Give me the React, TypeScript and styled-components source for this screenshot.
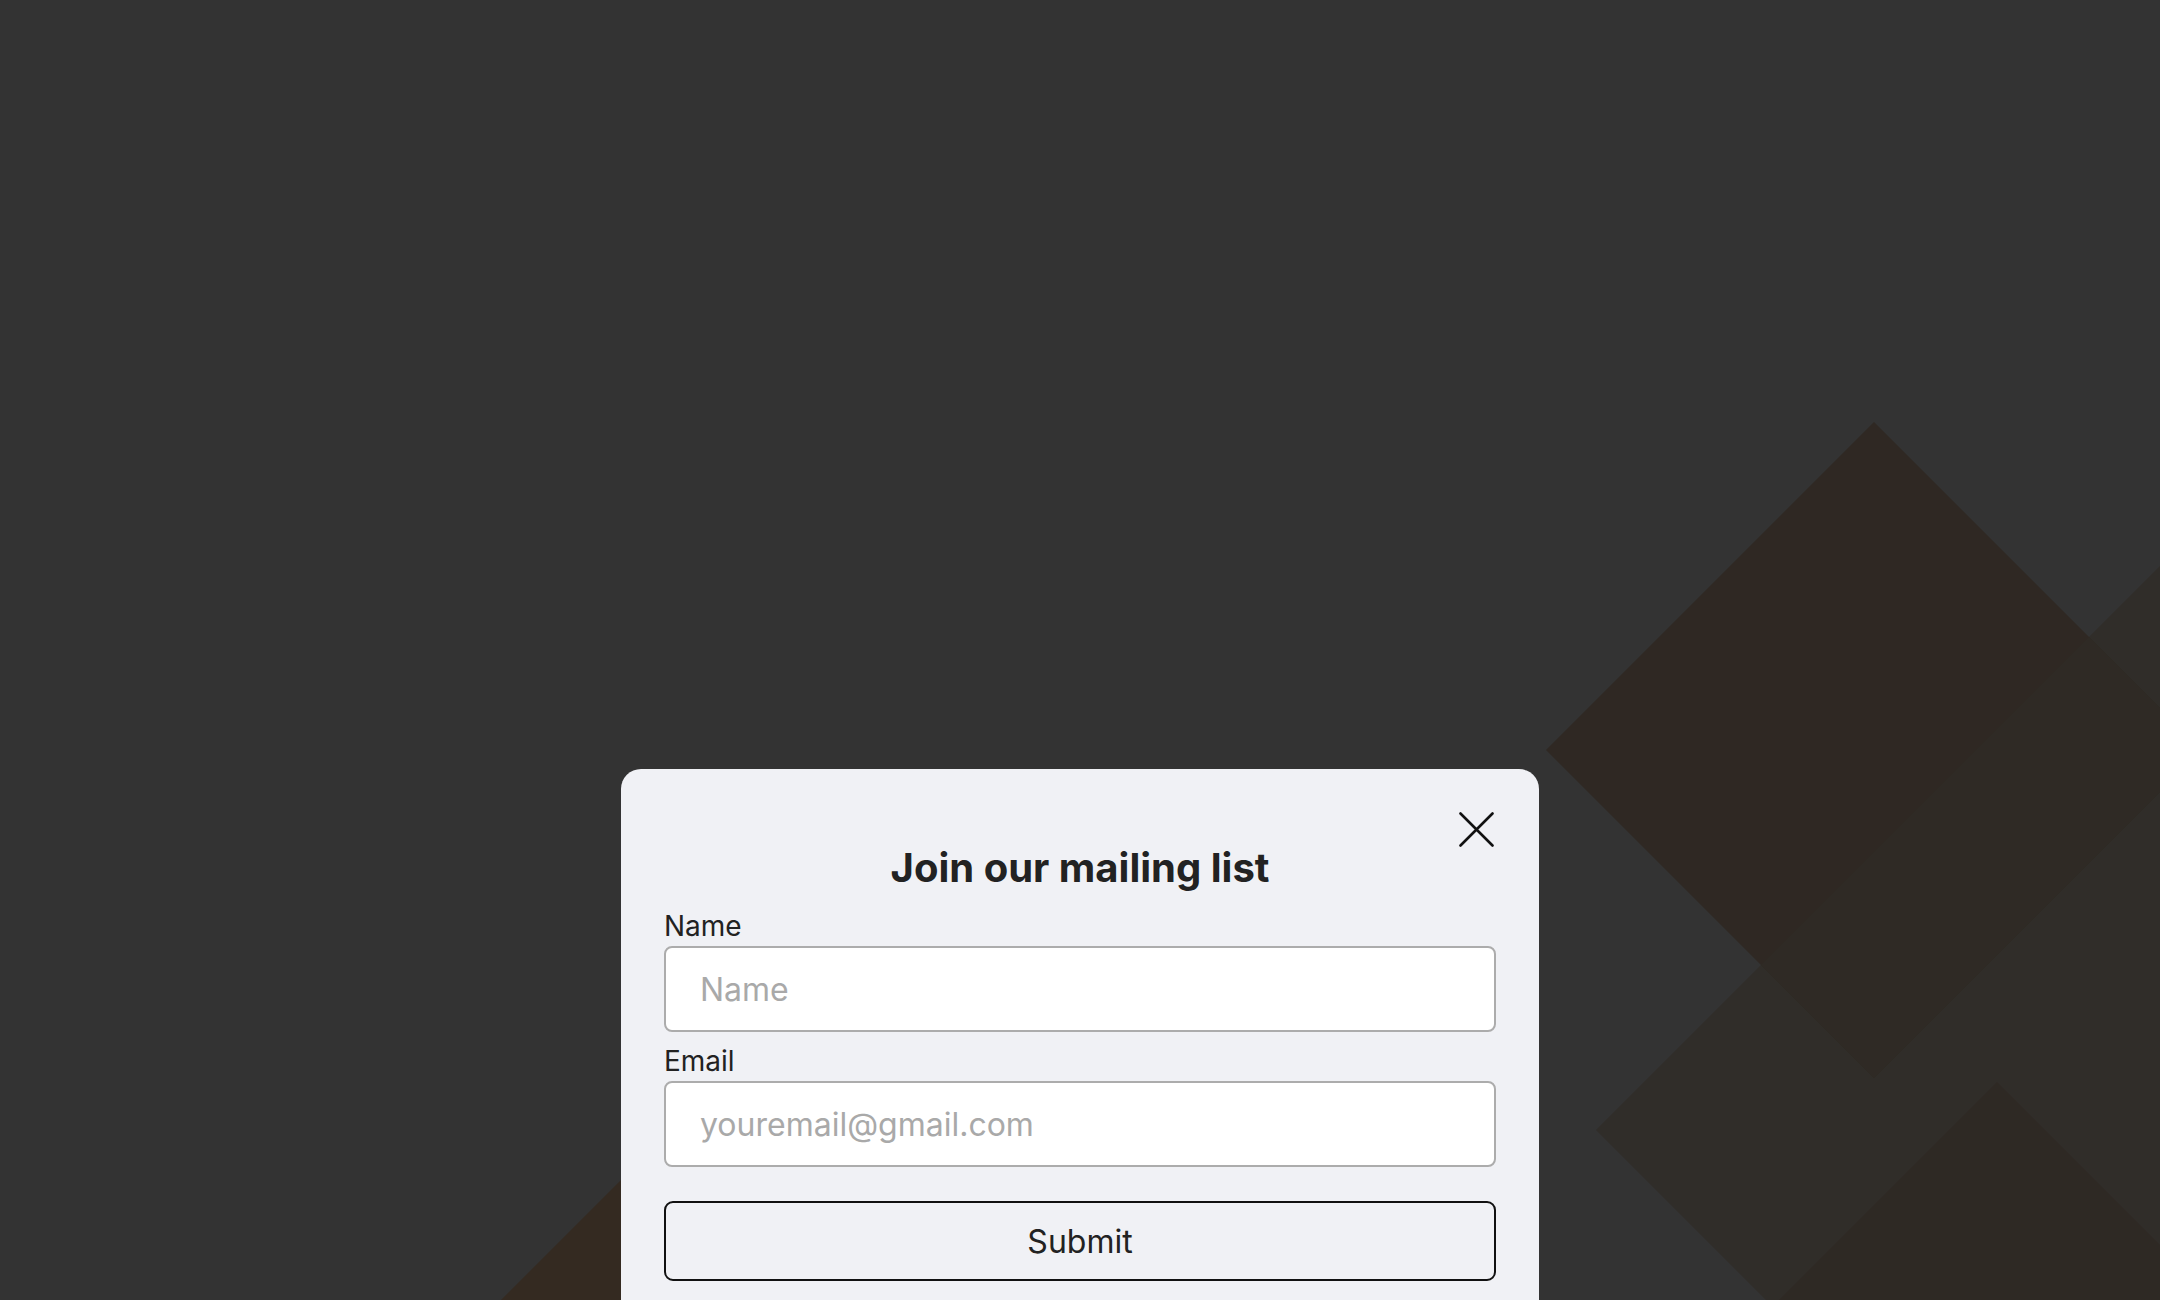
import styled, { createGlobalStyle } from 'styled-components';

const GlobalStyle = createGlobalStyle`
	* {
		box-sizing: border-box;
	}
	body {
		margin: 0;
		font-family: Inter, 'Noto Sans', 'Liberation Sans', sans-serif;
		background: #333333;
	}
`;

const Page = styled.div`
	position: relative;
	display: flex;
	justify-content: center;
	align-items: flex-start;
	height: 100vh;
	padding-top: 769px;
	overflow: hidden;
	background: #333333;
`;

const Backdrop = styled.svg`
	position: absolute;
	inset: 0;
	width: 100%;
	height: 100%;
	z-index: 0;
`;

const Modal = styled.div`
	position: relative;
	z-index: 1;
	width: 918px;
	padding: 75px 43px 48px;
	background: #f0f1f5;
	border-radius: 20px;
`;

const CloseButton = styled.button`
	position: absolute;
	top: 43px;
	right: 45px;
	width: 35px;
	height: 35px;
	padding: 0;
	border: none;
	background: transparent;
	cursor: pointer;
	display: flex;
`;

const Title = styled.h2`
	margin: 0 0 17px;
	font-size: 40px;
	line-height: 48px;
	font-weight: 700;
	color: #222222;
	text-align: center;
`;

const Form = styled.form`
	display: flex;
	flex-direction: column;
`;

const Field = styled.div<{ $last?: boolean }>`
	display: flex;
	flex-direction: column;
	gap: 3px;
	margin-bottom: ${(props) => (props.$last ? '34px' : '12px')};
`;

const Label = styled.label`
	font-size: 28px;
	line-height: 34px;
	color: #222222;
`;

const Input = styled.input`
	height: 86px;
	padding: 0 34px;
	border: 2px solid #acacac;
	border-radius: 8px;
	background: #ffffff;
	font-family: inherit;
	font-size: 32px;
	color: #222222;
	outline: none;
	&::placeholder {
		color: #a9a9a9;
	}
`;

const SubmitButton = styled.button`
	height: 80px;
	border: 2px solid #111111;
	border-radius: 9px;
	background: transparent;
	font-family: inherit;
	font-size: 32px;
	color: #222222;
	cursor: pointer;
`;

const App = () => {
	return (
		<>
			<GlobalStyle />
			<Page>
				<Backdrop viewBox="0 0 2160 1300" preserveAspectRatio="none" aria-hidden="true">
					<polygon points="1596,1130 2346,380 3096,1130 2346,1880" fill="#302d29" />
					<polygon points="1874,422 2202,750 1874,1078 1546,750" fill="#2f2823" />
					<polygon points="2089,637 2202,750 1874,1078 1761,965" fill="#2f2a25" />
					<polygon points="1997,1082 2327,1412 1997,1742 1667,1412" fill="#2e2924" />
					<polygon points="760,1041 1060,1341 760,1641 460,1341" fill="#342a21" />
				</Backdrop>
				<Modal>
					<CloseButton type="button" aria-label="Close">
						<svg width="35" height="35" viewBox="0 0 35 35" fill="none">
							<path d="M1.5 1.5 L33.5 33.5 M33.5 1.5 L1.5 33.5" stroke="#111" strokeWidth="2.6" strokeLinecap="round" />
						</svg>
					</CloseButton>
					<Title>Join our mailing list</Title>
					<Form onSubmit={(e) => e.preventDefault()}>
						<Field>
							<Label htmlFor="name">Name</Label>
							<Input id="name" type="text" placeholder="Name" />
						</Field>
						<Field $last>
							<Label htmlFor="email">Email</Label>
							<Input id="email" type="email" placeholder="youremail@gmail.com" />
						</Field>
						<SubmitButton type="submit">Submit</SubmitButton>
					</Form>
				</Modal>
			</Page>
		</>
	);
};

export default App;
